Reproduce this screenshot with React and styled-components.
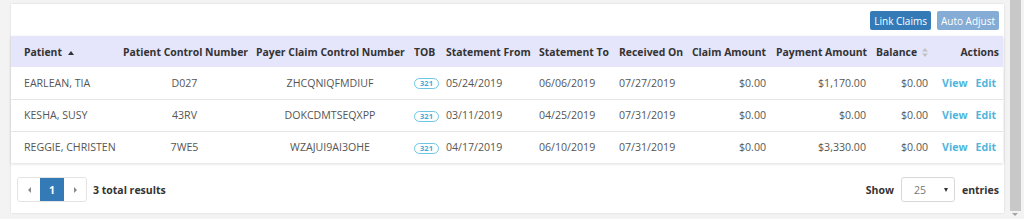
import React from "react";
import styled, { createGlobalStyle } from "styled-components";

const GlobalStyle = createGlobalStyle`
  html, body {
    margin: 0;
    padding: 0;
    background: #f3f3f3;
    font-family: "Open Sans", "Liberation Sans", Arial, sans-serif;
  }
`;

const theme = {
  primary: "#337ab7",
  primaryMuted: "#85acd4",
  info: "#4fb6dc",
  header: "#e5e5fb",
  text: "#555",
  strong: "#333",
  line: "#e6e6e6",
};

const Page = styled.div`
  display: flex;
  width: 1024px;
  height: 219px;
  overflow: hidden;
`;

const Main = styled.div`
  flex: 1;
  padding: 4px 0 0 11px;
`;

const ScrollTrack = styled.div`
  width: 19px;
  display: flex;
  flex-direction: column;
  align-items: center;
  padding-left: 1px;
  box-sizing: border-box;
`;

const ScrollThumb = styled.div`
  width: 11px;
  height: 211px;
  background: #c8c8c8;
`;

const ScrollArrow = styled.div`
  width: 0;
  height: 0;
  margin-top: 2px;
  border-left: 3px solid transparent;
  border-right: 3px solid transparent;
  border-top: 3px solid #a3a3a3;
`;

const Panel = styled.div`
  width: 993px;
  height: 209px;
  background: #fff;
  box-shadow: 0 0 2px rgba(0, 0, 0, 0.12);
  display: flex;
  flex-direction: column;
`;

const Toolbar = styled.div`
  display: flex;
  justify-content: flex-end;
  gap: 6px;
  padding: 7px 5px 6px 0;
`;

const Button = styled.button`
  height: 19px;
  padding: 0 4px;
  border: none;
  border-radius: 2px;
  font-family: inherit;
  font-size: 10px;
  color: #fff;
  background: ${(p) => (p.$muted ? theme.primaryMuted : theme.primary)};
  cursor: pointer;
`;

const Table = styled.table`
  width: 992px;
  border-collapse: collapse;
  table-layout: fixed;
  box-shadow: 0 1px 3px rgba(0, 0, 0, 0.14);
  font-size: 10.4px;
`;

const HeadRow = styled.tr`
  background: ${theme.header};
  height: 31px;
`;

const Th = styled.th`
  font-weight: 700;
  color: ${theme.strong};
  text-align: ${(p) => p.$align || "left"};
  padding: 0 ${(p) => p.$pr || 5}px 0 ${(p) => p.$pl || 5}px;
  white-space: nowrap;
`;

const Row = styled.tr`
  height: 32px;
  border-bottom: 1px solid ${theme.line};
  &:last-child {
    border-bottom: none;
  }
`;

const Td = styled.td`
  color: ${theme.text};
  font-size: 10.6px;
  text-align: ${(p) => p.$align || "left"};
  padding: 0 ${(p) => p.$pr || 5}px 0 ${(p) => p.$pl || 5}px;
  white-space: nowrap;
`;

const Badge = styled.span`
  display: inline-block;
  box-sizing: border-box;
  width: 25px;
  height: 11px;
  line-height: 9px;
  border: 1px solid #6ec6e4;
  border-radius: 6px;
  color: #46acd6;
  font-size: 7.5px;
  font-weight: 700;
  text-align: center;
  vertical-align: middle;
`;

const ActionLink = styled.a`
  color: ${theme.info};
  font-weight: 700;
  text-decoration: none;
  margin-left: ${(p) => p.$gap || 0}px;
  cursor: pointer;
`;

const SortIcon = styled.svg`
  margin-left: 6px;
  vertical-align: 1px;
`;

const Footer = styled.div`
  display: flex;
  align-items: center;
  justify-content: space-between;
  padding: 14px 5px 0 6px;
`;

const Left = styled.div`
  display: flex;
  align-items: center;
  gap: 6px;
`;

const Pager = styled.div`
  display: flex;
  height: 25px;
  border: 1px solid #e3e3e3;
  border-radius: 3px;
  box-sizing: border-box;
  overflow: hidden;
`;

const PageCell = styled.div`
  width: ${(p) => (p.$active ? 24 : 22)}px;
  display: flex;
  align-items: center;
  justify-content: center;
  background: ${(p) => (p.$active ? theme.primary : "#fff")};
  color: #fff;
  font-size: 10.5px;
  font-weight: 700;
`;

const Caret = styled.span`
  width: 0;
  height: 0;
  border-top: 3px solid transparent;
  border-bottom: 3px solid transparent;
  ${(p) =>
    p.$dir === "left"
      ? "border-right: 3px solid #8a8a8a;"
      : "border-left: 3px solid #8a8a8a;"}
`;

const StrongText = styled.span`
  font-size: 10.5px;
  font-weight: 700;
  color: ${theme.strong};
`;

const Right = styled.div`
  display: flex;
  align-items: center;
  gap: 7px;
`;

const Select = styled.div`
  width: 54px;
  height: 25px;
  box-sizing: border-box;
  border: 1px solid #d8d8d8;
  border-radius: 3px;
  display: flex;
  align-items: center;
  justify-content: space-between;
  padding: 0 6px 0 12px;
  color: #777;
  font-size: 10.5px;
`;

const SelectCaret = styled.span`
  width: 0;
  height: 0;
  border-left: 2.5px solid transparent;
  border-right: 2.5px solid transparent;
  border-top: 4px solid #333;
`;

const columns = [
  { key: "patient", label: "Patient", width: 107, align: "left", pl: 13, sort: "up" },
  { key: "pcn", label: "Patient Control Number", width: 133, align: "center" },
  { key: "payer", label: "Payer Claim Control Number", width: 158, align: "center" },
  { key: "tob", label: "TOB", width: 32, align: "left" },
  { key: "from", label: "Statement From", width: 93, align: "left" },
  { key: "to", label: "Statement To", width: 80, align: "left" },
  { key: "received", label: "Received On", width: 73, align: "left" },
  { key: "claim", label: "Claim Amount", width: 84, align: "right" },
  { key: "payment", label: "Payment Amount", width: 100, align: "right" },
  { key: "balance", label: "Balance", width: 62, align: "right", sort: "both" },
  { key: "actions", label: "Actions", width: 70, align: "right", pr: 4 },
];

const rows = [
  { patient: "EARLEAN, TIA", pcn: "D027", payer: "ZHCQNIQFMDIUF", tob: "321", from: "05/24/2019", to: "06/06/2019", received: "07/27/2019", claim: "$0.00", payment: "$1,170.00", balance: "$0.00" },
  { patient: "KESHA, SUSY", pcn: "43RV", payer: "DOKCDMTSEQXPP", tob: "321", from: "03/11/2019", to: "04/25/2019", received: "07/31/2019", claim: "$0.00", payment: "$0.00", balance: "$0.00" },
  { patient: "REGGIE, CHRISTEN", pcn: "7WE5", payer: "WZAJUI9AI3OHE", tob: "321", from: "04/17/2019", to: "06/10/2019", received: "07/31/2019", claim: "$0.00", payment: "$3,330.00", balance: "$0.00" },
];

const Sort = ({ type }) =>
  type === "up" ? (
    <SortIcon width="6" height="4" viewBox="0 0 6 4">
      <path d="M0 4 L3 0 L6 4 Z" fill="#333" />
    </SortIcon>
  ) : (
    <SortIcon width="6" height="9" viewBox="0 0 6 9" style={{ marginLeft: 5, verticalAlign: -1 }}>
      <path d="M0 3.5 L3 0 L6 3.5 Z M0 5.5 L3 9 L6 5.5 Z" fill="#c2c2c2" />
    </SortIcon>
  );

const cell = (col, row) => {
  if (col.key === "tob") return <Badge>{row.tob}</Badge>;
  if (col.key === "actions")
    return (
      <>
        <ActionLink>View</ActionLink>
        <ActionLink $gap={8}>Edit</ActionLink>
      </>
    );
  return row[col.key];
};

const App = () => (
  <Page>
    <GlobalStyle />
    <Main>
      <Panel>
        <Toolbar>
          <Button>Link Claims</Button>
          <Button $muted>Auto Adjust</Button>
        </Toolbar>
        <Table>
          <colgroup>
            {columns.map((c) => (
              <col key={c.key} style={{ width: c.width }} />
            ))}
          </colgroup>
          <thead>
            <HeadRow>
              {columns.map((c) => (
                <Th key={c.key} $align={c.align} $pl={c.pl} $pr={c.pr}>
                  {c.label}
                  {c.sort && <Sort type={c.sort} />}
                </Th>
              ))}
            </HeadRow>
          </thead>
          <tbody>
            {rows.map((r) => (
              <Row key={r.patient}>
                {columns.map((c) => (
                  <Td key={c.key} $align={c.align} $pl={c.pl} $pr={c.key === "actions" ? 7 : c.pr}>
                    {cell(c, r)}
                  </Td>
                ))}
              </Row>
            ))}
          </tbody>
        </Table>
        <Footer>
          <Left>
            <Pager>
              <PageCell>
                <Caret $dir="left" />
              </PageCell>
              <PageCell $active>1</PageCell>
              <PageCell>
                <Caret $dir="right" />
              </PageCell>
            </Pager>
            <StrongText>3 total results</StrongText>
          </Left>
          <Right>
            <StrongText>Show</StrongText>
            <Select>
              25
              <SelectCaret />
            </Select>
            <StrongText>entries</StrongText>
          </Right>
        </Footer>
      </Panel>
    </Main>
    <ScrollTrack>
      <ScrollThumb />
      <ScrollArrow />
    </ScrollTrack>
  </Page>
);

export default App;
